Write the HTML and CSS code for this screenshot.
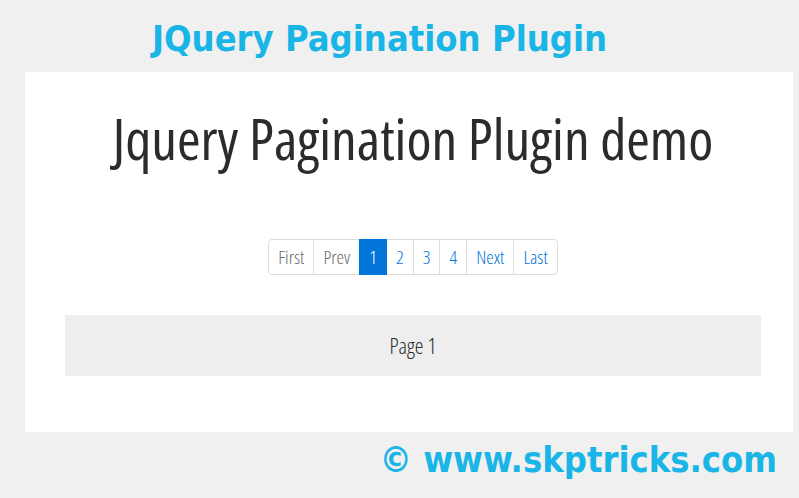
FILE: index.html
```html
<!DOCTYPE html>
<html lang="en">
<head>
<meta charset="utf-8">
<title>JQuery Pagination Plugin</title>
<link rel="stylesheet" href="styles.css">
</head>
<body>
<header class="site-header">
  <div class="site-title">JQuery Pagination Plugin</div>
</header>
<main class="panel">
  <h1 class="demo-title">Jquery Pagination Plugin demo</h1>
  <nav class="pager-wrap">
    <ul class="pagination">
      <li class="page-item disabled"><a class="page-link">First</a></li>
      <li class="page-item disabled"><a class="page-link">Prev</a></li>
      <li class="page-item active"><a class="page-link">1</a></li>
      <li class="page-item"><a class="page-link">2</a></li>
      <li class="page-item"><a class="page-link">3</a></li>
      <li class="page-item"><a class="page-link">4</a></li>
      <li class="page-item"><a class="page-link">Next</a></li>
      <li class="page-item"><a class="page-link">Last</a></li>
    </ul>
  </nav>
  <div class="page-content">Page 1</div>
</main>
<footer class="site-footer">
  <div class="credit">© www.skptricks.com</div>
</footer>
</body>
</html>
```
FILE: styles.css
```css
html, body {
  margin: 0;
  padding: 0;
}
body {
  background: #f0f0f0;
  width: 799px;
  height: 498px;
  overflow: hidden;
}
.site-header {
  padding: 21px 0 0 152px;
  height: 36px;
}
.site-title {
  font-family: "DejaVu Sans", sans-serif;
  font-weight: bold;
  font-stretch: condensed;
  font-size: 36px;
  line-height: 36px;
  color: #19b5e6;
  white-space: nowrap;
}
.panel {
  margin: 15px 0 0 25px;
  width: 768px;
  box-sizing: border-box;
  padding: 36px 32px 56px 40px;
  background: #ffffff;
  display: flex;
  flex-direction: column;
  align-items: stretch;
}
.demo-title {
  margin: 0;
  font-family: "Open Sans", sans-serif;
  font-stretch: 75%;
  font-weight: 380;
  font-size: 57px;
  line-height: 60px;
  color: #292b2c;
  text-align: center;
  white-space: nowrap;
}
.pager-wrap {
  margin-top: 71px;
  display: flex;
  justify-content: center;
}
.pagination {
  display: flex;
  list-style: none;
  margin: 0;
  padding: 0;
  border-radius: 4px;
}
.page-link {
  display: block;
  font-family: "Open Sans", sans-serif;
  font-stretch: 75%;
  font-weight: 350;
  font-size: 19px;
  line-height: 20px;
  padding: 7px 9px;
  border: 1px solid #dddddd;
  margin-left: -1px;
  color: #0275d8;
  background: #ffffff;
}
.page-item:first-child .page-link {
  margin-left: 0;
  border-radius: 4px 0 0 4px;
}
.page-item:last-child .page-link {
  border-radius: 0 4px 4px 0;
}
.page-item.disabled .page-link {
  color: #636c72;
}
.page-item.active .page-link {
  background: #0275d8;
  border-color: #0275d8;
  color: #ffffff;
  position: relative;
}
.page-content {
  margin-top: 40px;
  height: 61px;
  background: #eeeeee;
  font-family: "Open Sans", sans-serif;
  font-stretch: 75%;
  font-weight: 350;
  font-size: 22px;
  line-height: 61px;
  color: #292b2c;
  text-align: center;
}
.site-footer {
  margin-top: 10px;
  padding-right: 22px;
  display: flex;
  justify-content: flex-end;
}
.credit {
  font-family: "DejaVu Sans", sans-serif;
  font-weight: bold;
  font-stretch: condensed;
  font-size: 36px;
  line-height: 36px;
  color: #19b5e6;
  white-space: nowrap;
}
```
